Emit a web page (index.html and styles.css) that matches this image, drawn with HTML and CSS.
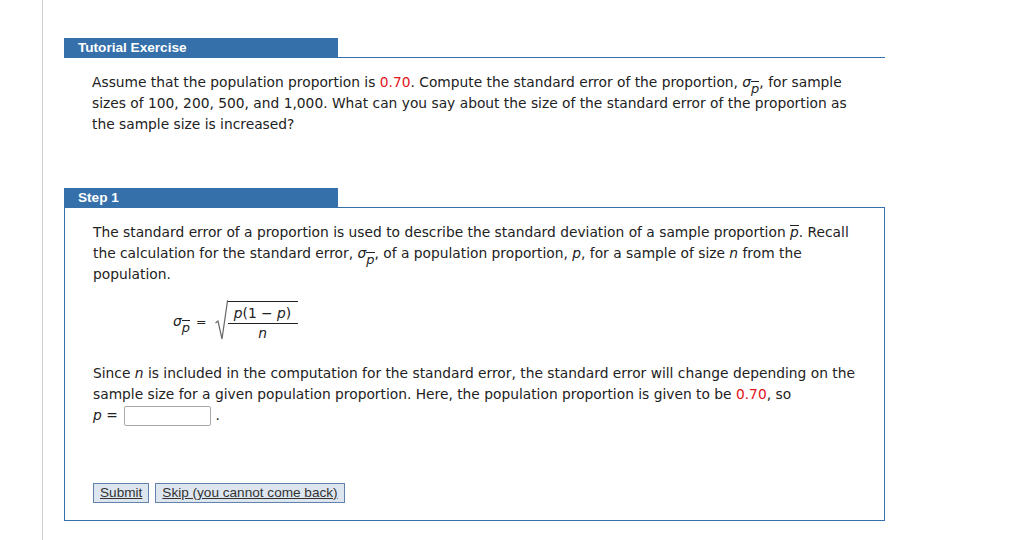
FILE: index.html
```html
<!DOCTYPE html>
<html lang="en">
<head>
    <meta charset="UTF-8">
    <title>Tutorial Exercise</title>
    <link rel="stylesheet" href="styles.css">
</head>
<body>
    <div class="page">
        <div class="tutorial">
            <div class="head"><span class="bar">Tutorial Exercise</span></div>
            <p class="question">
                Assume that the population proportion is <span class="red">0.70</span>. Compute the standard error of the proportion, <span class="sig">σ<span class="sub"><i class="bar-p">p</i></span></span>, for sample<br>
                sizes of 100, 200, 500, and 1,000. What can you say about the size of the standard error of the proportion as<br>
                the sample size is increased?
            </p>
        </div>

        <div class="step">
            <div class="head"><span class="bar">Step 1</span></div>
            <div class="box">
                <p>
                    The standard error of a proportion is used to describe the standard deviation of a sample proportion <i class="bar-p">p</i>. Recall<br>
                    the calculation for the standard error, <span class="sig">σ<span class="sub"><i class="bar-p">p</i></span></span>, of a population proportion, <i>p</i>, for a sample of size <i>n</i> from the<br>
                    population.
                </p>

                <!-- formula: sigma = sqrt(p(1-p)/n) -->
                <div class="formula">
                    <span class="sig">σ<span class="sub"><i class="bar-p">p</i></span></span>
                    <span class="eq">=</span>
                    <span class="root">
                        <svg width="13" height="40" viewBox="0 0 13 40">
                            <path d="M0.5 23 L3 21 L7 39 L12.5 0.8 L13 0.8" fill="none" stroke="#666" stroke-width="1.2"/>
                        </svg>
                        <span class="frac">
                            <span class="num"><i>p</i>(1 − <i>p</i>)</span>
                            <span class="den"><i>n</i></span>
                        </span>
                    </span>
                </div>

                <p>
                    Since <i>n</i> is included in the computation for the standard error, the standard error will change depending on the<br>
                    sample size for a given population proportion. Here, the population proportion is given to be <span class="red">0.70</span>, so<br>
                    <i>p</i> = <input type="text" class="answer"> .
                </p>

                <div class="buttons">
                    <button>Submit</button>
                    <button>Skip (you cannot come back)</button>
                </div>
            </div>
        </div>
    </div>
</body>
</html>
```

FILE: styles.css
```css
*{
    margin:0;
    padding:0;
    box-sizing: border-box;
}

body{
    font-family: "DejaVu Sans", Verdana, sans-serif;
    font-size: 13.8px;
    color: #222;
    background: white;
}

.page{
    margin-left: 42px;
    border-left: 1px solid #cfcfcf;
    min-height: 540px;
    padding: 38px 0 0 21px;
}

.head{
    width: 821px;
    height: 20px;
    border-bottom: 1px solid #3570aa;
}

.head .bar{
    display: inline-block;
    width: 274px;
    height: 20px;
    background-color: #3570aa;
    color: white;
    font-family: "Liberation Sans", Arial, sans-serif;
    font-weight: bold;
    font-size: 13.6px;
    line-height: 20px;
    padding-left: 14px;
}

.question{
    padding: 14px 0 0 28px;
    line-height: 21px;
}

.red{
    color: #e3141a;
}

.step{
    margin-top: 53px;
}

.box{
    width: 821px;
    border: 1px solid #3570aa;
    border-top: none;
    padding: 14px 20px 17px 28px;
    line-height: 21px;
}

/* sigma with p-bar subscript */
.sig{
    font-style: italic;
    white-space: nowrap;
}

.sig .sub{
    display: inline-block;
    position: relative;
    top: 6px;
    font-size: 13px;
    line-height: 12px;
}

.bar-p{
    display: inline-block;
    border-top: 1px solid #222;
    line-height: 11px;
    padding-top: 1px;
}

.formula{
    display: flex;
    align-items: center;
    margin: 15px 0 0 80px;
    height: 42px;
}

.formula .sig{
    font-size: 13.8px;
}

.formula .eq{
    margin: 0 8px 0 6px;
    font-size: 12.5px;
}

.root{
    display: flex;
    align-items: flex-start;
}

.root svg{
    display: block;
}

.frac{
    display: flex;
    flex-direction: column;
    align-items: center;
    border-top: 1px solid #222;
    width: 70px;
    margin-top: 1px;
}

.num{
    line-height: 20px;
    padding-top: 1px;
    border-bottom: 1px solid #222;
    width: 100%;
    text-align: center;
}

.den{
    line-height: 18px;
}

.formula + p{
    margin-top: 21px;
}

.answer{
    width: 87px;
    height: 20px;
    border: 1px solid #a9a9a9;
    border-radius: 2px;
    vertical-align: middle;
    margin-left: 2px;
}

.buttons{
    margin-top: 57px;
    display: flex;
    gap: 6px;
}

.buttons button{
    font-family: "Liberation Sans", Arial, sans-serif;
    font-size: 13.6px;
    color: #333;
    text-decoration: underline;
    background-color: #dde6ef;
    border: 1px solid #5f83ad;
    height: 20px;
    line-height: 18px;
    padding: 0 6px;
    cursor: pointer;
}
```
